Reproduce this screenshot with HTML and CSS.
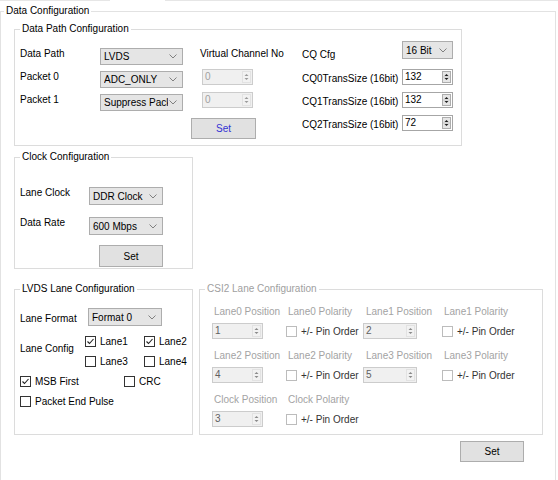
FILE: index.html
```html
<!DOCTYPE html>
<html>
<head>
<meta charset="utf-8">
<title>Data Configuration</title>
<link rel="stylesheet" href="styles.css">
</head>
<body>
<div class="topline"><span class="seg a"></span><span class="seg b"></span></div>
<fieldset class="group outer">
  <legend>Data Configuration</legend>
  <div class="outer-body">

    <fieldset class="group datapath">
      <legend>Data Path Configuration</legend>
      <div class="dp-body">
        <div class="dp-left">
          <span class="lbl">Data Path</span>
          <div class="combo h17"><span class="val">LVDS</span><svg class="chev" width="8" height="5" viewBox="0 0 8 5"><polyline points="0.5,0.5 4,4 7.5,0.5" fill="none" stroke="#808080"/></svg></div>
          <span class="lbl">Packet 0</span>
          <div class="combo h17"><span class="val">ADC_ONLY</span><svg class="chev" width="8" height="5" viewBox="0 0 8 5"><polyline points="0.5,0.5 4,4 7.5,0.5" fill="none" stroke="#808080"/></svg></div>
          <span class="lbl">Packet 1</span>
          <div class="combo h17"><span class="val clip">Suppress Packet</span><svg class="chev" width="8" height="5" viewBox="0 0 8 5"><polyline points="0.5,0.5 4,4 7.5,0.5" fill="none" stroke="#808080"/></svg></div>
        </div>
        <div class="dp-mid">
          <span class="lbl vc">Virtual Channel No</span>
          <div class="spin dis vc-spin s1"><span class="num">0</span><svg class="arr" width="9" height="12" viewBox="0 0 9 12"><rect x="0.5" y="0.5" width="8" height="11" fill="#f2f2f2" stroke="#e2e2e2"/><polygon points="2.5,5 4.5,3 6.5,5" fill="#9a9a9a"/><polygon points="2.5,7 6.5,7 4.5,9" fill="#9a9a9a"/></svg></div>
          <div class="spin dis vc-spin s2"><span class="num">0</span><svg class="arr" width="9" height="12" viewBox="0 0 9 12"><rect x="0.5" y="0.5" width="8" height="11" fill="#f2f2f2" stroke="#e2e2e2"/><polygon points="2.5,5 4.5,3 6.5,5" fill="#9a9a9a"/><polygon points="2.5,7 6.5,7 4.5,9" fill="#9a9a9a"/></svg></div>
          <button class="btn blue dp-set">Set</button>
        </div>
        <div class="dp-right">
          <span class="lbl r1">CQ Cfg</span>
          <div class="combo h18 cq-combo"><span class="val">16 Bit</span><svg class="chev" width="8" height="5" viewBox="0 0 8 5"><polyline points="0.5,0.5 4,4 7.5,0.5" fill="none" stroke="#808080"/></svg></div>
          <span class="lbl r2">CQ0TransSize (16bit)</span>
          <div class="spin en"><span class="num">132</span><svg class="arr" width="9" height="12" viewBox="0 0 9 12"><rect x="0.5" y="0.5" width="8" height="11" fill="#e6e6e6" stroke="#adadad"/><line x1="1" y1="6" x2="8" y2="6" stroke="#c8c8c8"/><polygon points="2.5,5 4.5,3 6.5,5" fill="#1e1e1e"/><polygon points="2.5,7 6.5,7 4.5,9" fill="#1e1e1e"/></svg></div>
          <span class="lbl r2">CQ1TransSize (16bit)</span>
          <div class="spin en"><span class="num">132</span><svg class="arr" width="9" height="12" viewBox="0 0 9 12"><rect x="0.5" y="0.5" width="8" height="11" fill="#e6e6e6" stroke="#adadad"/><line x1="1" y1="6" x2="8" y2="6" stroke="#c8c8c8"/><polygon points="2.5,5 4.5,3 6.5,5" fill="#1e1e1e"/><polygon points="2.5,7 6.5,7 4.5,9" fill="#1e1e1e"/></svg></div>
          <span class="lbl r2">CQ2TransSize (16bit)</span>
          <div class="spin en"><span class="num">72</span><svg class="arr" width="9" height="12" viewBox="0 0 9 12"><rect x="0.5" y="0.5" width="8" height="11" fill="#e6e6e6" stroke="#adadad"/><line x1="1" y1="6" x2="8" y2="6" stroke="#c8c8c8"/><polygon points="2.5,5 4.5,3 6.5,5" fill="#1e1e1e"/><polygon points="2.5,7 6.5,7 4.5,9" fill="#1e1e1e"/></svg></div>
        </div>
      </div>
    </fieldset>

    <fieldset class="group clock">
      <legend>Clock Configuration</legend>
      <div class="clock-body">
        <span class="lbl">Lane Clock</span>
        <div class="combo h18"><span class="val">DDR Clock</span><svg class="chev" width="8" height="5" viewBox="0 0 8 5"><polyline points="0.5,0.5 4,4 7.5,0.5" fill="none" stroke="#808080"/></svg></div>
        <span class="lbl">Data Rate</span>
        <div class="combo h18"><span class="val">600 Mbps</span><svg class="chev" width="8" height="5" viewBox="0 0 8 5"><polyline points="0.5,0.5 4,4 7.5,0.5" fill="none" stroke="#808080"/></svg></div>
        <button class="btn clock-set">Set</button>
      </div>
    </fieldset>

    <div class="lane-row">
      <fieldset class="group lvds">
        <legend>LVDS Lane Configuration</legend>
        <div class="lvds-body">
          <div class="fmt-row">
            <span class="lbl fmt-lbl">Lane Format</span>
            <div class="combo h18 fmt-combo"><span class="val">Format 0</span><svg class="chev" width="8" height="5" viewBox="0 0 8 5"><polyline points="0.5,0.5 4,4 7.5,0.5" fill="none" stroke="#808080"/></svg></div>
          </div>
          <div class="cfg-row">
            <span class="lbl cfg-lbl">Lane Config</span>
            <div class="cfg-grid">
              <label class="chk"><span class="cb"><svg width="9" height="9" viewBox="0 0 9 9"><polyline points="1.5,4.5 3.5,6.5 7.5,2" fill="none" stroke="#222" stroke-width="1.1"/></svg></span>Lane1</label>
              <label class="chk"><span class="cb"><svg width="9" height="9" viewBox="0 0 9 9"><polyline points="1.5,4.5 3.5,6.5 7.5,2" fill="none" stroke="#222" stroke-width="1.1"/></svg></span>Lane2</label>
              <label class="chk"><span class="cb"></span>Lane3</label>
              <label class="chk"><span class="cb"></span>Lane4</label>
            </div>
          </div>
          <div class="opt-row">
            <label class="chk msb"><span class="cb"><svg width="9" height="9" viewBox="0 0 9 9"><polyline points="1.5,4.5 3.5,6.5 7.5,2" fill="none" stroke="#222" stroke-width="1.1"/></svg></span>MSB First</label>
            <label class="chk"><span class="cb"></span>CRC</label>
          </div>
          <div class="opt-row">
            <label class="chk"><span class="cb"></span>Packet End Pulse</label>
          </div>
        </div>
      </fieldset>

      <fieldset class="group csi">
        <legend>CSI2 Lane Configuration</legend>
        <div class="csi-body">
          <div class="cell"><span class="lbl dl">Lane0 Position</span><div class="spin dis csi-spin"><span class="num">1</span><svg class="arr" width="9" height="12" viewBox="0 0 9 12"><rect x="0.5" y="0.5" width="8" height="11" fill="#f2f2f2" stroke="#e2e2e2"/><polygon points="2.5,5 4.5,3 6.5,5" fill="#8a8a8a"/><polygon points="2.5,7 6.5,7 4.5,9" fill="#8a8a8a"/></svg></div></div>
          <div class="cell"><span class="lbl dl">Lane0 Polarity</span><label class="chk pol"><span class="cb off"></span>+/- Pin Order</label></div>
          <div class="cell"><span class="lbl dl">Lane1 Position</span><div class="spin dis csi-spin wide"><span class="num">2</span><svg class="arr" width="9" height="12" viewBox="0 0 9 12"><rect x="0.5" y="0.5" width="8" height="11" fill="#f2f2f2" stroke="#e2e2e2"/><polygon points="2.5,5 4.5,3 6.5,5" fill="#8a8a8a"/><polygon points="2.5,7 6.5,7 4.5,9" fill="#8a8a8a"/></svg></div></div>
          <div class="cell"><span class="lbl dl">Lane1 Polarity</span><label class="chk pol"><span class="cb off"></span>+/- Pin Order</label></div>

          <div class="cell"><span class="lbl dl">Lane2 Position</span><div class="spin dis csi-spin"><span class="num">4</span><svg class="arr" width="9" height="12" viewBox="0 0 9 12"><rect x="0.5" y="0.5" width="8" height="11" fill="#f2f2f2" stroke="#e2e2e2"/><polygon points="2.5,5 4.5,3 6.5,5" fill="#8a8a8a"/><polygon points="2.5,7 6.5,7 4.5,9" fill="#8a8a8a"/></svg></div></div>
          <div class="cell"><span class="lbl dl">Lane2 Polarity</span><label class="chk pol"><span class="cb off"></span>+/- Pin Order</label></div>
          <div class="cell"><span class="lbl dl">Lane3 Position</span><div class="spin dis csi-spin wide"><span class="num">5</span><svg class="arr" width="9" height="12" viewBox="0 0 9 12"><rect x="0.5" y="0.5" width="8" height="11" fill="#f2f2f2" stroke="#e2e2e2"/><polygon points="2.5,5 4.5,3 6.5,5" fill="#8a8a8a"/><polygon points="2.5,7 6.5,7 4.5,9" fill="#8a8a8a"/></svg></div></div>
          <div class="cell"><span class="lbl dl">Lane3 Polarity</span><label class="chk pol"><span class="cb off"></span>+/- Pin Order</label></div>

          <div class="cell"><span class="lbl dl">Clock Position</span><div class="spin dis csi-spin"><span class="num">3</span><svg class="arr" width="9" height="12" viewBox="0 0 9 12"><rect x="0.5" y="0.5" width="8" height="11" fill="#f2f2f2" stroke="#e2e2e2"/><polygon points="2.5,5 4.5,3 6.5,5" fill="#8a8a8a"/><polygon points="2.5,7 6.5,7 4.5,9" fill="#8a8a8a"/></svg></div></div>
          <div class="cell"><span class="lbl dl">Clock Polarity</span><label class="chk pol"><span class="cb off"></span>+/- Pin Order</label></div>
        </div>
      </fieldset>
    </div>

    <div class="footer"><button class="btn foot-set">Set</button></div>
  </div>
</fieldset>
</body>
</html>
```

FILE: styles.css
```css
* { box-sizing: border-box; }
html, body { margin: 0; padding: 0; overflow: hidden; background: #fff; }
body {
  width: 558px;
  height: 480px;
  font-family: "Liberation Sans", Arial, sans-serif;
  font-size: 10px;
  color: #000;
}

.topline { display: flex; height: 1px; }
.topline .a { width: 110px; background: #e6e6e6; }
.topline .b { margin-left: 55px; flex: 1; background: #e6e6e6; }

.group {
  margin: 0;
  padding: 0;
  border: 1px solid #dcdcdc;
  min-width: 0;
}
.group > legend {
  padding: 0 2px;
  margin-left: 5px;
  line-height: 12px;
  font-size: 10px;
}

.group.outer { margin-top: 4px; width: 556px; height: 480px; border-color: #e2e2e2; }
.group.outer > legend { margin-left: 3px; }
.outer-body { padding: 6px 0 0 13px; }

.lbl { line-height: 12px; white-space: nowrap; }

/* combo box */
.combo {
  display: flex;
  align-items: center;
  background: #e5e5e5;
  border: 1px solid #adadad;
  padding: 0 5px 0 3px;
  line-height: 12px;
}
.combo.h17 { height: 17px; }
.combo.h18 { height: 18px; }
.combo .val { flex: 1; white-space: nowrap; overflow: hidden; padding-top: 1px; }
.combo .val.clip { text-overflow: clip; }
.combo .chev { flex: none; margin-left: 1px; }

/* spin box */
.spin {
  display: flex;
  align-items: center;
  height: 16px;
  border: 1px solid #a9a9a9;
  background: #fff;
  padding: 0 1px 0 2px;
}
.spin .num { flex: 1; line-height: 12px; }
.spin .arr { flex: none; }
.spin.dis { background: #f0f0f0; border-color: #cccccc; color: #a0a0a0; }
.spin.en { border-color: #a6a6a6; }

/* buttons */
.btn {
  margin: 0;
  padding: 0;
  font-family: inherit;
  font-size: 10px;
  color: #000;
  background: #e1e1e1;
  border: 1px solid #adadad;
  border-radius: 0;
}
.btn.blue { color: #3434d4; }

/* data path */
.group.datapath { width: 448px; }
.dp-body { display: flex; align-items: flex-start; padding: 0 0 6px 5px; }
.dp-left {
  margin-top: 13px;
  display: grid;
  grid-template-columns: 80px 83px;
  row-gap: 6px;
  align-items: start;
}
.dp-mid {
  margin-left: 8px;
  margin-top: 13px;
  width: 65px;
  display: flex;
  flex-direction: column;
}
.dp-mid .vc { padding-left: 9px; }
.vc-spin { margin-left: 11px; width: 51px; }
.vc-spin.s1 { margin-top: 9px; }
.vc-spin.s2 { margin-top: 7px; }
.dp-set { margin-top: 10px; width: 65px; height: 21px; }
.dp-right {
  margin-left: 46px;
  margin-top: 6px;
  display: grid;
  grid-template-columns: 100px 51px;
  row-gap: 7px;
  align-items: start;
}
.dp-right .r1 { padding-top: 8px; }
.dp-right .r2 { padding-top: 4px; }
.cq-combo { margin-bottom: 3px; }

/* clock */
.group.clock { width: 179px; margin-top: 5px; }
.clock-body {
  display: grid;
  grid-template-columns: 69px 74px;
  padding: 24px 0 1px 5px;
  row-gap: 12px;
  align-items: start;
}
.clock-set { grid-column: 2; justify-self: end; width: 64px; height: 22px; margin-top: -2px; }

/* lane row */
.lane-row { display: flex; margin-top: 14px; }
.group.lvds { width: 179px; }
.group.csi { width: 344px; margin-left: 6px; }
.group.csi > legend { color: #a0a0a0; }

.lvds-body { padding: 13px 0 0 5px; }
.fmt-row { display: flex; align-items: flex-start; }
.fmt-lbl { width: 68px; padding-top: 5px; }
.fmt-combo { width: 74px; }
.cfg-row { display: flex; align-items: flex-start; margin-top: 10px; }
.cfg-lbl { width: 65px; padding-top: 7px; }
.cfg-grid { display: grid; grid-template-columns: 59px auto; row-gap: 9px; }
.opt-row { display: flex; margin-top: 9px; }
.msb { width: 104px; }

.chk { display: flex; align-items: center; gap: 4px; line-height: 11px; height: 11px; white-space: nowrap; }
.cb {
  flex: none;
  width: 11px;
  height: 11px;
  border: 1px solid #333;
  background: #fff;
  display: flex;
  align-items: center;
  justify-content: center;
}
.cb.off { border-color: #bcbcbc; }

.csi-body {
  display: grid;
  grid-template-columns: 74px 78px 78px auto;
  row-gap: 11px;
  padding: 11px 0 7px 11px;
}
.cell { display: flex; flex-direction: column; align-items: flex-start; }
.dl { color: #a3a3a3; padding-left: 3px; margin-bottom: 5px; }
.csi-spin { margin-left: 1px; width: 51px; }
.csi-spin.wide { width: 54px; margin-left: 0; }
.spin.csi-spin { color: #606060; }
.pol { height: 16px; margin-left: 1px; color: #333; }

.footer { display: flex; justify-content: flex-end; padding-right: 31px; margin-top: 6px; }
.foot-set { width: 64px; height: 21px; }
```
